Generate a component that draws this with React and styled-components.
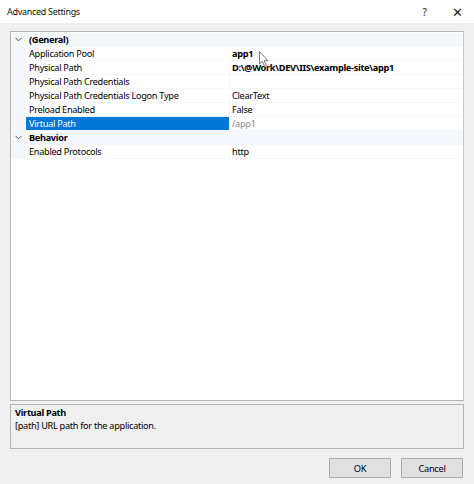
import React from "react";
import styled, { createGlobalStyle } from "styled-components";

const Global = createGlobalStyle`
  html, body { margin: 0; padding: 0; background: #f0f0f0; }
  body {
    font-family: "Noto Sans", "Segoe UI", sans-serif;
    font-size: 9.2px;
    letter-spacing: -0.3px;
    color: #000;
  }
`;

const Window = styled.div`
  position: relative;
  width: 474px;
  height: 484px;
  display: flex;
  flex-direction: column;
  background: #f0f0f0;
  overflow: hidden;
`;

const TitleBar = styled.div`
  height: 23px;
  flex: none;
  background: #fff;
  display: flex;
  align-items: center;
  padding-left: 7px;
  font-size: 9px;
`;

const Title = styled.span`
  flex: 1;
  color: #111;
`;

const TitleButton = styled.span`
  width: 33px;
  text-align: center;
  font-size: ${(p) => (p.$big ? "13px" : "10px")};
  color: #222;
`;

const Body = styled.div`
  flex: 1;
  display: flex;
  flex-direction: column;
  padding: 8px 10px 10px 10px;
  gap: 3px;
`;

const Grid = styled.div`
  height: 367px;
  flex: none;
  background: #fff;
  border: 1px solid #b4b4b4;
  border-right-color: #c8c8c8;
  padding-top: 1px;
  display: flex;
  flex-direction: column;
`;

const Row = styled.div`
  display: grid;
  grid-template-columns: 15px 205px 1fr;
  height: 14px;
  box-sizing: border-box;
  border-bottom: 1px solid #f4f7fc;
  background: ${(p) => (p.$category ? "#f4f7fc" : "#fff")};
  line-height: 13px;
`;

const Margin = styled.div`
  background: #f4f7fc;
  display: flex;
  align-items: center;
  justify-content: center;
`;

const Name = styled.div`
  padding-left: 3px;
  white-space: nowrap;
  overflow: hidden;
  font-weight: ${(p) => (p.$bold ? 700 : 400)};
  background: ${(p) => (p.$selected ? "#0078d7" : "transparent")};
  color: ${(p) => (p.$selected ? "#fff" : "#000")};
  border-right: ${(p) => (p.$category ? "none" : "1px solid #f4f7fc")};
  margin-right: 1px;
  grid-column: ${(p) => (p.$category ? "2 / 4" : "auto")};
`;

const Value = styled.div`
  padding-left: 1px;
  white-space: nowrap;
  font-weight: ${(p) => (p.$bold ? 700 : 400)};
  color: ${(p) => (p.$dim ? "#8a8a8a" : "#000")};
`;

const Chevron = () => (
  <svg width="7" height="5" viewBox="0 0 7 5">
    <path d="M0.5 0.8 L3.5 3.8 L6.5 0.8" fill="none" stroke="#505050" strokeWidth="1" />
  </svg>
);

const Description = styled.div`
  height: 41px;
  flex: none;
  border: 1px solid #b4b4b4;
  background: #f0f0f0;
  padding: 1px 4px;
  line-height: 13px;
`;

const DescTitle = styled.div`
  font-weight: 700;
`;

const Footer = styled.div`
  display: flex;
  justify-content: flex-end;
  gap: 10px;
  padding-top: 6px;
  padding-right: 1px;
`;

const Button = styled.button`
  width: 62px;
  height: 20px;
  background: #e1e1e1;
  border: 1px solid #adadad;
  font-family: inherit;
  font-size: 9.3px;
  letter-spacing: inherit;
  padding: 0;
  color: #000;
`;

const Cursor = styled.svg`
  position: absolute;
  left: 259px;
  top: 51px;
`;

const rows = [
  { category: true, name: "(General)" },
  { name: "Application Pool", value: "app1", bold: true },
  { name: "Physical Path", value: "D:\\@Work\\DEV\\IIS\\example-site\\app1", bold: true },
  { name: "Physical Path Credentials", value: "" },
  { name: "Physical Path Credentials Logon Type", value: "ClearText" },
  { name: "Preload Enabled", value: "False" },
  { name: "Virtual Path", value: "/app1", selected: true, dim: true },
  { category: true, name: "Behavior" },
  { name: "Enabled Protocols", value: "http" },
];

export default function App() {
  return (
    <>
      <Global />
      <Window>
        <TitleBar>
          <Title>Advanced Settings</Title>
          <TitleButton>?</TitleButton>
          <TitleButton $big>✕</TitleButton>
        </TitleBar>
        <Body>
          <Grid>
            {rows.map((r) =>
              r.category ? (
                <Row key={r.name} $category>
                  <Margin>
                    <Chevron />
                  </Margin>
                  <Name $bold $category>
                    {r.name}
                  </Name>
                </Row>
              ) : (
                <Row key={r.name}>
                  <Margin />
                  <Name $selected={r.selected}>{r.name}</Name>
                  <Value $bold={r.bold} $dim={r.dim}>
                    {r.value}
                  </Value>
                </Row>
              )
            )}
          </Grid>
          <Description>
            <DescTitle>Virtual Path</DescTitle>
            <div>[path] URL path for the application.</div>
          </Description>
          <Footer>
            <Button>OK</Button>
            <Button>Cancel</Button>
          </Footer>
        </Body>
        <Cursor width="11" height="17" viewBox="0 0 11 17">
          <path d="M0.5 0.5 L0.5 13 L3.3 10.3 L5.6 15.5 L7.4 14.7 L5.1 9.7 L8.8 9.7 Z" fill="#fff" stroke="#777" strokeWidth="1" />
        </Cursor>
      </Window>
    </>
  );
}
